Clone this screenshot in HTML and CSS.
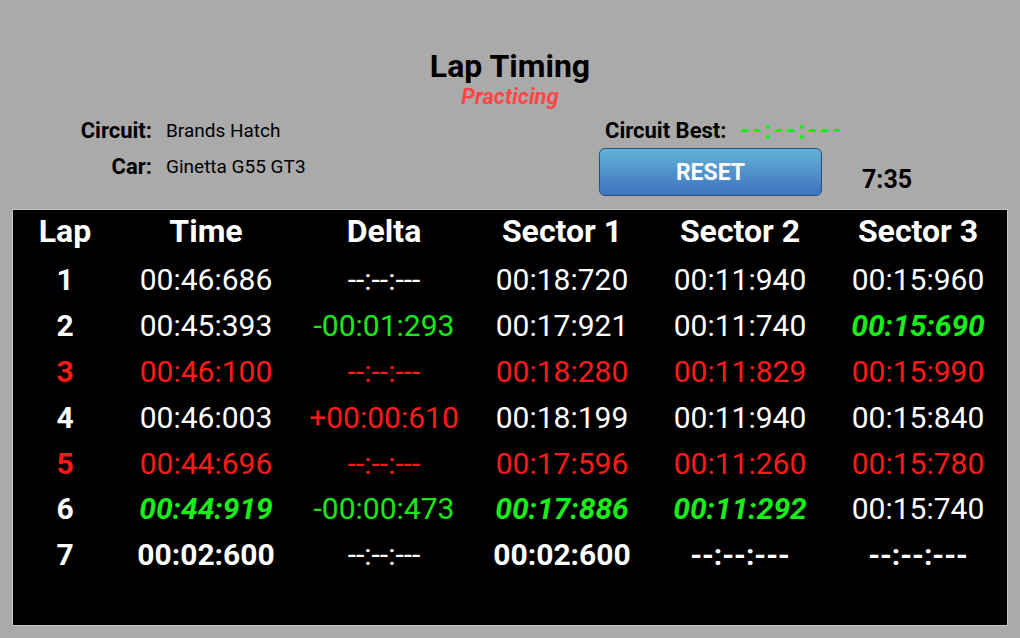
FILE: index.html
```html
<!DOCTYPE html>
<html>
<head>
<meta charset="utf-8">
<link rel="stylesheet" href="styles.css">
</head>
<body>
<div class="page">
  <header class="head">
    <h1 class="title">Lap Timing</h1>
    <div class="status">Practicing</div>
  </header>
  <section class="info">
    <div class="details">
      <div class="label">Circuit:</div><div class="value">Brands Hatch</div>
      <div class="label">Car:</div><div class="value">Ginetta G55 GT3</div>
    </div>
    <div class="best">
      <div class="best-line"><span class="label">Circuit Best:</span><span class="best-time">--:--:---</span></div>
      <div class="controls">
        <button class="reset">RESET</button>
        <span class="clock">7:35</span>
      </div>
    </div>
  </section>
  <section class="laps">
    <div class="row head-row">
      <div>Lap</div><div>Time</div><div>Delta</div><div>Sector 1</div><div>Sector 2</div><div>Sector 3</div>
    </div>
    <div class="row">
      <div class="lapno">1</div><div>00:46:686</div><div>--:--:---</div><div>00:18:720</div><div>00:11:940</div><div>00:15:960</div>
    </div>
    <div class="row">
      <div class="lapno">2</div><div>00:45:393</div><div class="green">-00:01:293</div><div>00:17:921</div><div>00:11:740</div><div class="best-cell">00:15:690</div>
    </div>
    <div class="row red">
      <div class="lapno">3</div><div>00:46:100</div><div>--:--:---</div><div>00:18:280</div><div>00:11:829</div><div>00:15:990</div>
    </div>
    <div class="row">
      <div class="lapno">4</div><div>00:46:003</div><div class="redtxt">+00:00:610</div><div>00:18:199</div><div>00:11:940</div><div>00:15:840</div>
    </div>
    <div class="row red">
      <div class="lapno">5</div><div>00:44:696</div><div>--:--:---</div><div>00:17:596</div><div>00:11:260</div><div>00:15:780</div>
    </div>
    <div class="row">
      <div class="lapno">6</div><div class="best-cell">00:44:919</div><div class="green">-00:00:473</div><div class="best-cell">00:17:886</div><div class="best-cell">00:11:292</div><div>00:15:740</div>
    </div>
    <div class="row current">
      <div class="lapno">7</div><div>00:02:600</div><div class="normal">--:--:---</div><div>00:02:600</div><div>--:--:---</div><div>--:--:---</div>
    </div>
  </section>
</div>
</body>
</html>
```
FILE: styles.css
```css
html, body {
  margin: 0;
  padding: 0;
  background: #aaaaaa;
  font-family: Roboto, "Liberation Sans", sans-serif;
  color: #000;
}
.page {
  width: 1020px;
  height: 638px;
  display: flex;
  flex-direction: column;
}
.head {
  padding-top: 48px;
  text-align: center;
}
.title {
  margin: 0;
  font-size: 32px;
  font-weight: 700;
  line-height: 36px;
}
.status {
  color: #ff4646;
  font-style: italic;
  font-weight: 700;
  font-size: 22px;
  line-height: 24px;
  margin-top: 1px;
}
.info {
  display: flex;
  height: 100px;
  flex: none;
}
.details {
  display: grid;
  grid-template-columns: 152px auto;
  grid-auto-rows: 36px;
  column-gap: 14px;
  align-items: center;
  align-content: start;
  width: 599px;
  margin-top: 3px;
}
.details .label {
  text-align: right;
}
.label {
  font-weight: 700;
  font-size: 22px;
}
.value {
  font-size: 19px;
}
.best {
  display: flex;
  flex-direction: column;
  margin-top: 3px;
}
.best-line {
  height: 36px;
  display: flex;
  align-items: center;
  padding-left: 6px;
  gap: 13px;
}
.best-time {
  color: #11ee11;
  font-weight: 700;
  font-size: 26px;
  letter-spacing: 2px;
}
.controls {
  display: flex;
  align-items: center;
}
.reset {
  width: 223px;
  height: 48px;
  border: 1px solid #2d4f7c;
  border-radius: 6px;
  background: linear-gradient(#62b3d6, #3f72bf);
  color: #fff;
  font-family: Roboto, "Liberation Sans", sans-serif;
  font-weight: 700;
  font-size: 23px;
  padding: 0;
}
.clock {
  margin-left: 40px;
  margin-top: 14px;
  font-weight: 700;
  font-size: 25px;
}
.laps {
  margin: 0 12px;
  height: 417px;
  background: #000;
  border: 1px solid #c4c4c4;
  color: #fff;
  box-sizing: border-box;
  flex: none;
}
.row {
  display: grid;
  grid-template-columns: 104px repeat(5, 178px);
  height: 45.8px;
  align-items: center;
  text-align: center;
  font-size: 30px;
}
.head-row {
  height: 41px;
  margin-bottom: 6px;
  font-weight: 700;
  font-size: 32px;
}
.lapno {
  font-weight: 700;
}
.red {
  color: #ff1a1a;
}
.redtxt {
  color: #ff1a1a;
}
.green {
  color: #1ae81a;
}
.best-cell {
  color: #1aee1a;
  font-weight: 700;
  font-style: italic;
}
.current div {
  font-weight: 700;
}
.current .normal {
  font-weight: 400;
}
```
